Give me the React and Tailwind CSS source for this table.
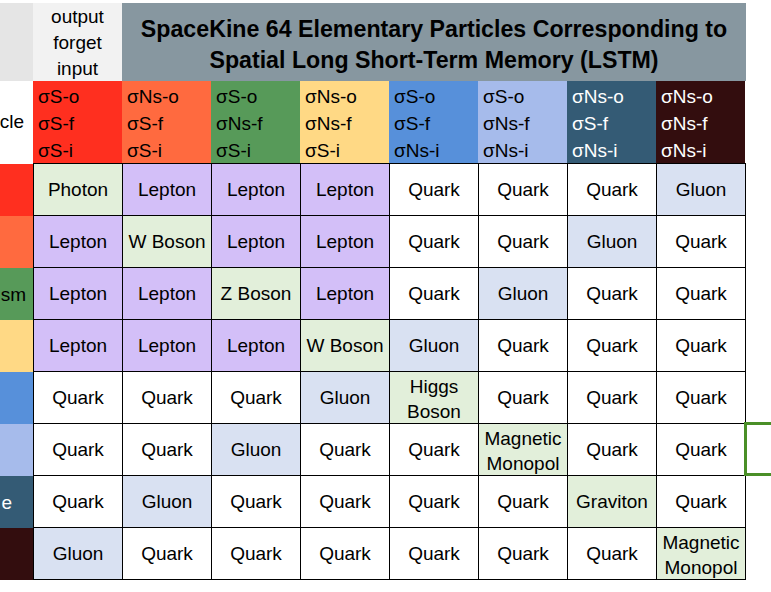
import React from 'react';

const G = 'bg-[#e2efda]';
const L = 'bg-[#d3bff8]';
const B = 'bg-[#d9e1f2]';
const W = 'bg-white';

const gates = [
  { bg: 'bg-[#ff2f1f]', text: 'text-black', lines: ['σS-o', 'σS-f', 'σS-i'] },
  { bg: 'bg-[#ff6a3f]', text: 'text-black', lines: ['σNs-o', 'σS-f', 'σS-i'] },
  { bg: 'bg-[#579a59]', text: 'text-black', lines: ['σS-o', 'σNs-f', 'σS-i'] },
  { bg: 'bg-[#ffd985]', text: 'text-black', lines: ['σNs-o', 'σNs-f', 'σS-i'] },
  { bg: 'bg-[#5790da]', text: 'text-black', lines: ['σS-o', 'σS-f', 'σNs-i'] },
  { bg: 'bg-[#a6bbeb]', text: 'text-black', lines: ['σS-o', 'σNs-f', 'σNs-i'] },
  { bg: 'bg-[#345b75]', text: 'text-white', lines: ['σNs-o', 'σS-f', 'σNs-i'] },
  { bg: 'bg-[#330d0e]', text: 'text-white', lines: ['σNs-o', 'σNs-f', 'σNs-i'] },
];

// left column: colour + the visible tail of the row label
const rowHeads = [
  { bg: 'bg-[#ff2f1f]', label: '', pr: '' },
  { bg: 'bg-[#ff6a3f]', label: '', pr: '' },
  { bg: 'bg-[#579a59]', label: 'sm', pr: 'pr-[7px]', text: 'text-black' },
  { bg: 'bg-[#ffd985]', label: '', pr: '' },
  { bg: 'bg-[#5790da]', label: '', pr: '' },
  { bg: 'bg-[#a6bbeb]', label: '', pr: '' },
  { bg: 'bg-[#345b75]', label: 'e', pr: 'pr-[21px]', text: 'text-white' },
  { bg: 'bg-[#330d0e]', label: '', pr: '' },
];

const grid = [
  [['Photon', G], ['Lepton', L], ['Lepton', L], ['Lepton', L], ['Quark', W], ['Quark', W], ['Quark', W], ['Gluon', B]],
  [['Lepton', L], ['W Boson', G], ['Lepton', L], ['Lepton', L], ['Quark', W], ['Quark', W], ['Gluon', B], ['Quark', W]],
  [['Lepton', L], ['Lepton', L], ['Z Boson', G], ['Lepton', L], ['Quark', W], ['Gluon', B], ['Quark', W], ['Quark', W]],
  [['Lepton', L], ['Lepton', L], ['Lepton', L], ['W Boson', G], ['Gluon', B], ['Quark', W], ['Quark', W], ['Quark', W]],
  [['Quark', W], ['Quark', W], ['Quark', W], ['Gluon', B], ['Higgs Boson', G], ['Quark', W], ['Quark', W], ['Quark', W]],
  [['Quark', W], ['Quark', W], ['Gluon', B], ['Quark', W], ['Quark', W], ['Magnetic Monopol', G], ['Quark', W], ['Quark', W]],
  [['Quark', W], ['Gluon', B], ['Quark', W], ['Quark', W], ['Quark', W], ['Quark', W], ['Graviton', G], ['Quark', W]],
  [['Gluon', B], ['Quark', W], ['Quark', W], ['Quark', W], ['Quark', W], ['Quark', W], ['Quark', W], ['Magnetic Monopol', G]],
];

const Cell = ({ text, bg }) => {
  const twoLine = text === 'Higgs Boson' || text === 'Magnetic Monopol';
  return (
    <div className={`w-[89px] h-[52px] pt-[2px] border-r border-b border-black flex items-center justify-center text-center ${bg}`}>
      {twoLine ? (
        <div className="leading-[25px]">
          {text.split(' ').map((w) => (
            <div key={w}>{w}</div>
          ))}
        </div>
      ) : (
        <span className="whitespace-nowrap">{text}</span>
      )}
    </div>
  );
};

export default function App() {
  return (
    <div className="relative w-[771px] h-[592px] overflow-hidden bg-white text-[19px] text-black" style={{ fontFamily: '"Liberation Sans", Arial, sans-serif' }}>
      <div className="pt-[3px]">
        {/* title row */}
        <div className="flex h-[78px]">
          <div className="w-[33px] bg-[#e5e5e5]" />
          <div className="w-[89px] bg-[#f2f2f2] pt-[1px] flex flex-col items-center justify-center leading-[26px]">
            <div>output</div>
            <div>forget</div>
            <div>input</div>
          </div>
          <div className="w-[624px] bg-[#8797a0] pt-[11px] text-center font-bold text-[23.2px] leading-[30.5px]">
            <div className="whitespace-nowrap">SpaceKine 64 Elementary Particles Corresponding to</div>
            <div className="whitespace-nowrap">Spatial Long Short-Term Memory (LSTM)</div>
          </div>
        </div>

        {/* gate row */}
        <div className="flex h-[82px]">
          <div className="w-[33px] bg-white flex items-center justify-end pr-[9px]">
            <span className="whitespace-nowrap">cle</span>
          </div>
          {gates.map((g, i) => (
            <div key={i} className={`w-[89px] pl-[5px] pt-[2px] leading-[27px] ${g.bg} ${g.text}`}>
              {g.lines.map((l, j) => (
                <div key={j}>{l}</div>
              ))}
            </div>
          ))}
        </div>

        {/* particle grid */}
        <div className="flex">
          <div className="w-[33px] flex flex-col pt-px">
            {rowHeads.map((r, i) => (
              <div key={i} className={`h-[52px] pt-[2px] flex items-center justify-end ${r.bg} ${r.pr} ${r.text || ''}`}>
                {r.label && <span className="whitespace-nowrap">{r.label}</span>}
              </div>
            ))}
          </div>
          <div className="border-l border-t border-black">
            {grid.map((row, i) => (
              <div key={i} className="flex">
                {row.map(([t, bg], j) => (
                  <Cell key={j} text={t} bg={bg} />
                ))}
              </div>
            ))}
          </div>
        </div>
      </div>

      {/* selected cell outline */}
      <div className="absolute left-[744px] top-[422px] w-[80px] h-[54px] border-[3px] border-[#4a8f28]" />
    </div>
  );
}
